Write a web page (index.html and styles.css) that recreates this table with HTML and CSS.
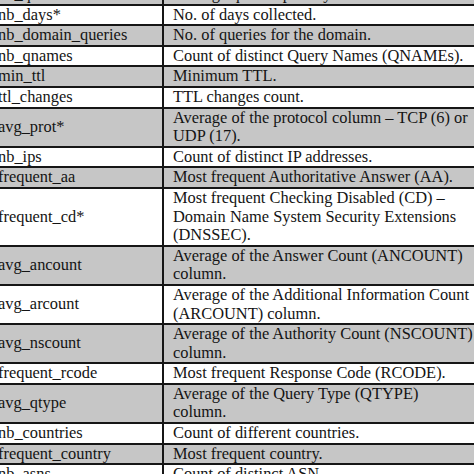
FILE: index.html
```html
<!DOCTYPE html>
<html>
<head>
<meta charset="utf-8">
<link rel="stylesheet" href="styles.css">
</head>
<body>
<div class="viewport">
<table class="features">
<colgroup><col class="c-name"><col class="c-desc"></colgroup>
<tbody>
<tr class="g"><td>nb_queries</td><td>Average queries per day.</td></tr>
<tr class="w"><td>nb_days*</td><td>No. of days collected.</td></tr>
<tr class="g"><td>nb_domain_queries</td><td>No. of queries for the domain.</td></tr>
<tr class="w"><td>nb_qnames</td><td>Count of distinct Query Names (QNAMEs).</td></tr>
<tr class="g"><td>min_ttl</td><td>Minimum TTL.</td></tr>
<tr class="w"><td>ttl_changes</td><td>TTL changes count.</td></tr>
<tr class="g"><td>avg_prot*</td><td>Average of the protocol column – TCP (6) or<br>UDP (17).</td></tr>
<tr class="w"><td>nb_ips</td><td>Count of distinct IP addresses.</td></tr>
<tr class="g"><td>frequent_aa</td><td>Most frequent Authoritative Answer (AA).</td></tr>
<tr class="w"><td>frequent_cd*</td><td>Most frequent Checking Disabled (CD) –<br>Domain Name System Security Extensions<br>(DNSSEC).</td></tr>
<tr class="g"><td>avg_ancount</td><td>Average of the Answer Count (ANCOUNT)<br>column.</td></tr>
<tr class="w"><td>avg_arcount</td><td>Average of the Additional Information Count<br>(ARCOUNT) column.</td></tr>
<tr class="g"><td>avg_nscount</td><td>Average of the Authority Count (NSCOUNT)<br>column.</td></tr>
<tr class="w"><td>frequent_rcode</td><td>Most frequent Response Code (RCODE).</td></tr>
<tr class="g"><td>avg_qtype</td><td>Average of the Query Type (QTYPE)<br>column.</td></tr>
<tr class="w"><td>nb_countries</td><td>Count of different countries.</td></tr>
<tr class="g"><td>frequent_country</td><td>Most frequent country.</td></tr>
<tr class="w"><td>nb_asns</td><td>Count of distinct ASN.</td></tr>
</tbody>
</table>
</div>
</body>
</html>
```
FILE: styles.css
```css
html, body {
  margin: 0;
  padding: 0;
  background: #ffffff;
}

.viewport {
  width: 474px;
  height: 474px;
  overflow: hidden;
}

.features {
  border-collapse: collapse;
  table-layout: fixed;
  width: 488px;
  margin: -17px 0 0 -14px;
  font-family: "Liberation Serif", "Times New Roman", serif;
  font-size: 16.4px;
  line-height: 18.6px;
  color: #141414;
}

.c-name { width: 176px; }
.c-desc { width: 312px; }

.features td {
  border: 2px solid #161616;
  padding: 0 0 0 10px;
  vertical-align: middle;
  text-align: left;
  white-space: nowrap;
  overflow: hidden;
}

.features td + td {
  padding-left: 9px;
  padding-right: 0;
}

.g td { background: #c6c6c6; }
.w td { background: #ffffff; }
```
